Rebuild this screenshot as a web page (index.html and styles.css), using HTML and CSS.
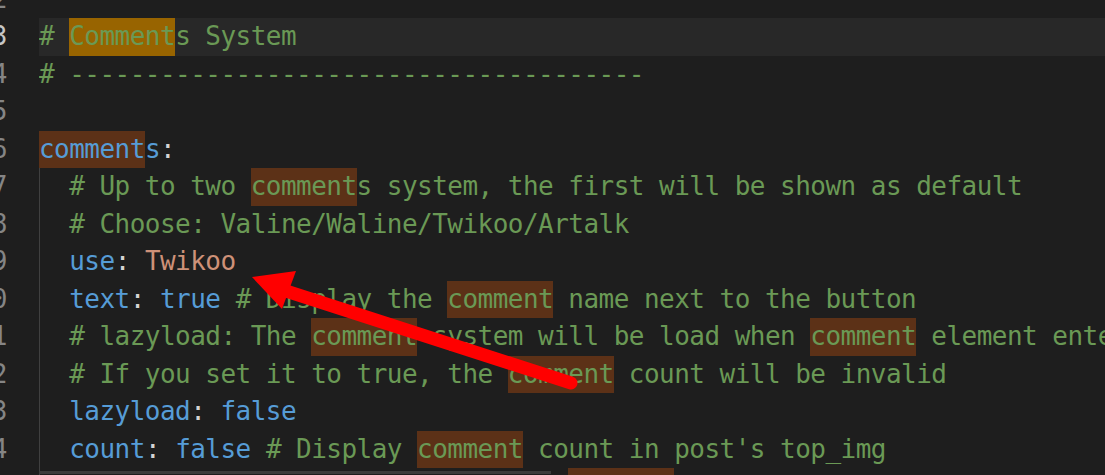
FILE: index.html
```html
<!DOCTYPE html>
<html lang="en">
<head>
  <meta charset="UTF-8" />
  <title>_config.butterfly.yml</title>
  <link rel="stylesheet" href="styles.css">
</head>
<body>
  <div class="editor">
    <div class="row"><span class="num"><span>62</span></span><span class="code"></span></div>
    <div class="row current"><span class="num"><span>63</span></span><span class="code"><span class="c"># <span class="m mc">Comment</span>s System</span></span></div>
    <div class="row"><span class="num"><span>64</span></span><span class="code"><span class="c"># --------------------------------------</span></span></div>
    <div class="row"><span class="num"><span>65</span></span><span class="code"></span></div>
    <div class="row"><span class="num"><span>66</span></span><span class="code"><span class="k"><span class="m">comment</span>s</span><span class="p">:</span></span></div>
    <div class="row guide"><span class="num"><span>67</span></span><span class="code">  <span class="c"># Up to two <span class="m">comment</span>s system, the first will be shown as default</span></span></div>
    <div class="row guide"><span class="num"><span>68</span></span><span class="code">  <span class="c"># Choose: Valine/Waline/Twikoo/Artalk</span></span></div>
    <div class="row guide"><span class="num"><span>69</span></span><span class="code">  <span class="k">use</span><span class="p">:</span> <span class="s">Twikoo</span></span></div>
    <div class="row guide"><span class="num"><span>70</span></span><span class="code">  <span class="k">text</span><span class="p">:</span> <span class="k">true</span> <span class="c"># Display the <span class="m">comment</span> name next to the button</span></span></div>
    <div class="row guide"><span class="num"><span>71</span></span><span class="code">  <span class="c"># lazyload: The <span class="m">comment</span> system will be load when <span class="m">comment</span> element enters the browser's viewport.</span></span></div>
    <div class="row guide"><span class="num"><span>72</span></span><span class="code">  <span class="c"># If you set it to true, the <span class="m">comment</span> count will be invalid</span></span></div>
    <div class="row guide"><span class="num"><span>73</span></span><span class="code">  <span class="k">lazyload</span><span class="p">:</span> <span class="k">false</span></span></div>
    <div class="row guide"><span class="num"><span>74</span></span><span class="code">  <span class="k">count</span><span class="p">:</span> <span class="k">false</span> <span class="c"># Display <span class="m">comment</span> count in post's top_img</span></span></div>
    <div class="row guide"><span class="num"><span>75</span></span><span class="code">  <span class="k">card_post_count</span><span class="p">:</span> <span class="k">false</span> <span class="c"># Display <span class="m">comment</span> count in Home Page</span></span></div>
  </div>

  <div class="hscroll"></div>

  <svg class="arrow" width="1105" height="475" viewBox="0 0 1105 475">
    <line x1="286" y1="291" x2="571" y2="383" stroke="#ff0000" stroke-width="13" stroke-linecap="round" />
    <polygon points="252,277 296,271 282,309" fill="#ff0000" />
  </svg>
</body>
</html>
```

FILE: styles.css
```css
body {
  margin: 0;
  width: 1105px;
  height: 475px;
  overflow: hidden;
  position: relative;
  background-color: #1e1e1e;
  font-family: 'DejaVu Sans Mono', 'Liberation Mono', monospace;
  font-size: 26px;
  letter-spacing: -0.53px;
  color: #d4d4d4;
}
.editor {
  margin-top: -19.5px;
}
.row {
  display: flex;
  height: 37.5px;
  line-height: 37.5px;
}
.num {
  flex: none;
  width: 39px;
  box-sizing: border-box;
  padding-right: 32px;
  display: flex;
  justify-content: flex-end;
  overflow: hidden;
  color: #858585;
}
.current .num {
  color: #c6c6c6;
}
.code {
  flex: 1;
  white-space: pre;
  overflow: hidden;
}
.current .code {
  background-color: #282828;
}
.guide .code {
  box-shadow: inset 1px 0 0 #404040;
}
.c {
  color: #6a9955;
}
.k {
  color: #569cd6;
}
.p {
  color: #d4d4d4;
}
.s {
  color: #ce9178;
}
.m {
  display: inline-block;
  background-color: #5c3117;
}
.mc {
  background-color: #986400;
}
.hscroll {
  position: absolute;
  left: 39px;
  bottom: 1px;
  width: 512px;
  height: 3px;
  background-color: #3c3c3c;
}
.arrow {
  position: absolute;
  left: 0;
  top: 0;
}
```
